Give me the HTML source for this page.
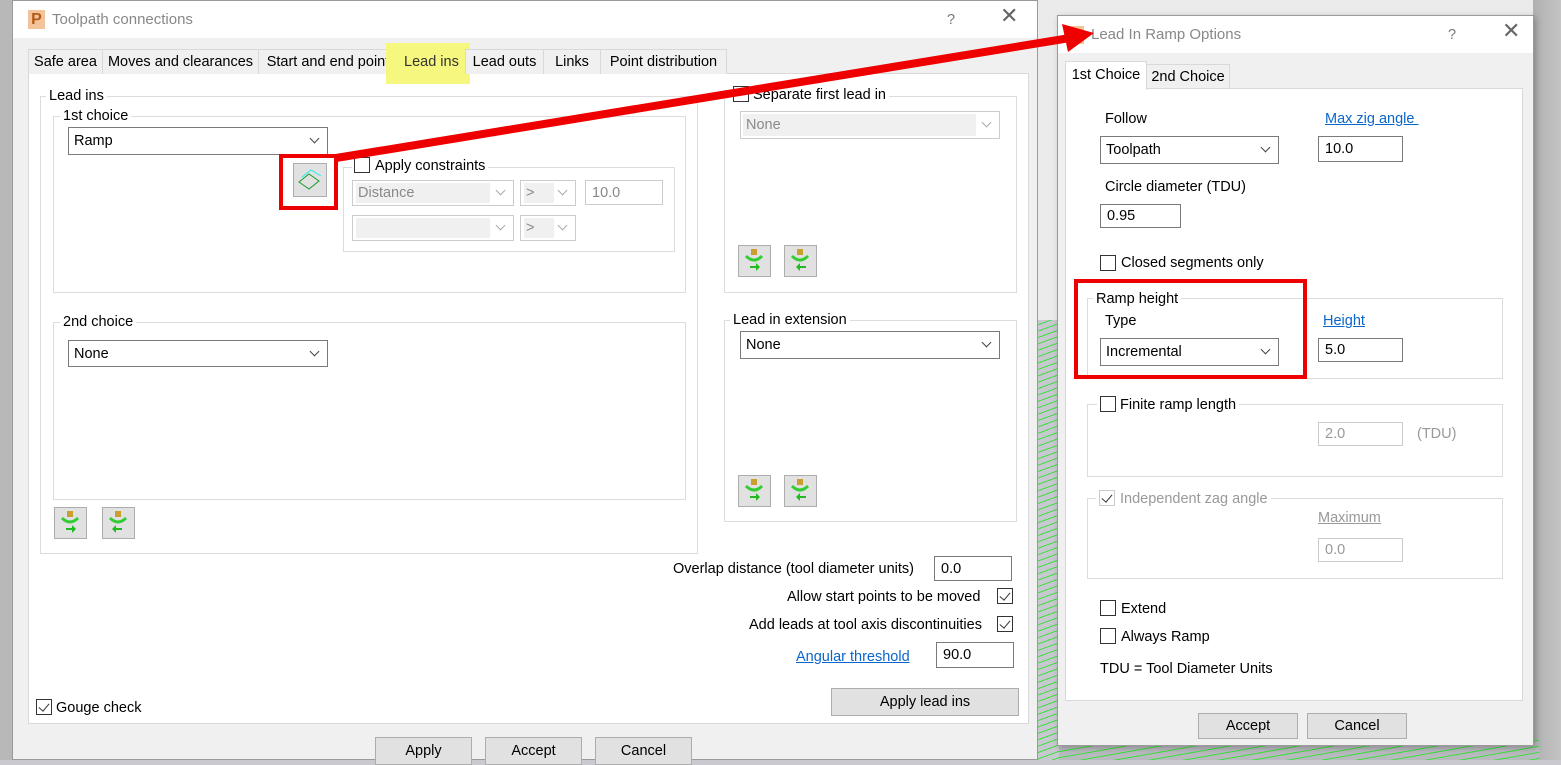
<!DOCTYPE html>
<html><head><meta charset="utf-8"><style>
*{box-sizing:border-box;margin:0;padding:0}
body{width:1561px;height:760px;position:relative;overflow:hidden;background:#c9c9cf;font-family:"Liberation Sans",sans-serif;font-size:14.5px;color:#000}
.a{position:absolute}
.t{position:absolute;white-space:nowrap;line-height:18px}
.grp{position:absolute;border:1px solid #dcdcdc}
.lbl{position:absolute;background:#fff;padding:0 3px;white-space:nowrap;line-height:18px}
.sel{position:absolute;background:#fff;border:1px solid #7a7a7a;padding-left:5px;display:flex;align-items:center}
.sel::after{content:"";position:absolute;right:9px;top:50%;margin-top:-6px;width:6px;height:6px;border-right:1px solid #444;border-bottom:1px solid #444;transform:rotate(45deg)}
.dis{border-color:#ccc;color:#8a8a8a}
.dis::after{border-color:#aaa}
.inp{position:absolute;background:#fff;border:1px solid #7a7a7a;padding-left:6px;display:flex;align-items:center}
.cb{position:absolute;width:16px;height:16px;border:1px solid #333;background:#fff}
.ck::after{content:"";position:absolute;left:4px;top:1px;width:5px;height:9px;border-right:1px solid #333;border-bottom:1px solid #333;transform:rotate(40deg)}
.btn{position:absolute;background:#e1e1e1;border:1px solid #adadad;display:flex;align-items:center;justify-content:center}
.ib{position:absolute;width:33px;height:32px;background:#e1e1e1;border:1px solid #adadad}
.link{color:#0a66cc;text-decoration:underline}
.tab{position:absolute;top:49px;height:25px;border:1px solid #d9d9d9;border-bottom:none;background:#f0f0f0;display:flex;align-items:center;justify-content:center;white-space:nowrap}
</style></head><body>
<div class="a" style="left:0;top:0;width:14px;height:760px;background:#b8b8b8"></div>
<div class="a" style="left:1037px;top:0;width:22px;height:760px;background:repeating-linear-gradient(160deg,#c8c8d0 0 5px,#3ce03c 5px 6px)"></div>
<div class="a" style="left:1037px;top:0;width:524px;height:320px;background:#ebebeb"></div>
<div class="a" style="left:1533px;top:0;width:28px;height:760px;background:linear-gradient(90deg,#b0b0b0,#c4c4c4)"></div>
<div class="a" style="left:1059px;top:740px;width:480px;height:20px;background:repeating-linear-gradient(170deg,#b9b9c0 0 5px,#3ce03c 5px 6px)"></div>

<div class="a" style="left:12px;top:0;width:1026px;height:760px;background:#f0f0f0;border:1px solid #9a9a9a"></div>
<div class="a" style="left:13px;top:1px;width:1024px;height:37px;background:#fff"></div>
<div class="a" style="left:28px;top:10px;width:17px;height:19px;background:#f3c49a;color:#b35a1a;font-weight:bold;font-size:16px;line-height:19px;text-align:center">P</div>
<div class="t" style="left:52px;top:11px;color:#888;font-size:15px">Toolpath connections</div>
<div class="t" style="left:947px;top:11px;color:#777">?</div>
<div class="t" style="left:1000px;top:7px;color:#666;font-size:22px">✕</div>

<div class="a" style="left:28px;top:73px;width:1001px;height:651px;background:#fff;border:1px solid #d9d9d9"></div>
<div class="tab" style="left:28px;width:75px">Safe area</div>
<div class="tab" style="left:102px;width:157px">Moves and clearances</div>
<div class="tab" style="left:258px;width:140px">Start and end point</div>
<div class="a" style="left:386px;top:43px;width:84px;height:41px;background:#f6f77e"></div>
<div class="t" style="left:404px;top:53px;color:#333">Lead ins</div>
<div class="tab" style="left:465px;width:79px">Lead outs</div>
<div class="tab" style="left:543px;width:58px">Links</div>
<div class="tab" style="left:600px;width:127px">Point distribution</div>

<div class="grp" style="left:40px;top:96px;width:658px;height:458px"></div>
<div class="lbl" style="left:46px;top:87px">Lead ins</div>
<div class="grp" style="left:53px;top:116px;width:633px;height:177px"></div>
<div class="lbl" style="left:60px;top:107px">1st choice</div>
<div class="sel" style="left:68px;top:127px;width:260px;height:28px">Ramp</div>
<div class="ib" style="left:293px;top:163px;width:34px;height:34px"><svg width="32" height="32"><path d="M8 13 L17 6 L27 12" fill="none" stroke="#2ee" stroke-width="1"/><path d="M5 18 L15 10 L25 17 L15 25 Z" fill="none" stroke="#1a9a2a" stroke-width="1"/></svg></div>
<div class="grp" style="left:343px;top:167px;width:332px;height:85px"></div>
<div class="lbl" style="left:352px;top:157px;padding-left:2px"><span class="cb" style="position:relative;display:inline-block;vertical-align:-3px;margin-right:5px"></span>Apply constraints</div>
<div class="sel dis" style="left:352px;top:180px;width:162px;height:26px"><span class="a" style="left:3px;top:2px;width:134px;height:20px;background:#f0f0f0"></span><span style="position:relative">Distance</span></div>
<div class="sel dis" style="left:520px;top:180px;width:56px;height:26px"><span class="a" style="left:3px;top:2px;width:30px;height:20px;background:#f0f0f0"></span><span style="position:relative">&gt;</span></div>
<div class="inp dis" style="left:585px;top:180px;width:78px;height:25px;border-color:#ccc;color:#888">10.0</div>
<div class="sel dis" style="left:352px;top:215px;width:162px;height:26px"><span class="a" style="left:3px;top:2px;width:134px;height:20px;background:#f0f0f0"></span></div>
<div class="sel dis" style="left:520px;top:215px;width:56px;height:26px"><span class="a" style="left:3px;top:2px;width:30px;height:20px;background:#f0f0f0"></span><span style="position:relative">&gt;</span></div>

<div class="grp" style="left:53px;top:322px;width:633px;height:178px"></div>
<div class="lbl" style="left:60px;top:313px">2nd choice</div>
<div class="sel" style="left:68px;top:340px;width:260px;height:27px">None</div>
<div class="ib" style="left:54px;top:507px"></div><div class="ib" style="left:102px;top:507px"></div>

<div class="grp" style="left:724px;top:96px;width:293px;height:197px"></div>
<div class="lbl" style="left:730px;top:86px"><span class="cb" style="position:relative;display:inline-block;vertical-align:-3px;margin-right:4px"></span>Separate first lead in</div>
<div class="sel dis" style="left:740px;top:111px;width:260px;height:28px"><span class="a" style="left:2px;top:2px;width:233px;height:22px;background:#f0f0f0"></span><span style="position:relative">None</span></div>
<div class="ib" style="left:738px;top:245px"></div><div class="ib" style="left:784px;top:245px"></div>
<div class="grp" style="left:724px;top:320px;width:293px;height:202px"></div>
<div class="lbl" style="left:730px;top:311px">Lead in extension</div>
<div class="sel" style="left:740px;top:331px;width:260px;height:28px">None</div>
<div class="ib" style="left:738px;top:475px"></div><div class="ib" style="left:784px;top:475px"></div>

<div class="t" style="left:673px;top:560px">Overlap distance (tool diameter units)</div>
<div class="inp" style="left:934px;top:556px;width:78px;height:25px">0.0</div>
<div class="t" style="left:787px;top:588px">Allow start points to be moved</div>
<div class="cb ck" style="left:997px;top:588px"></div>
<div class="t" style="left:749px;top:616px">Add leads at tool axis discontinuities</div>
<div class="cb ck" style="left:997px;top:616px"></div>
<div class="t link" style="left:796px;top:648px">Angular threshold</div>
<div class="inp" style="left:936px;top:642px;width:78px;height:26px">90.0</div>
<div class="btn" style="left:831px;top:688px;width:188px;height:28px">Apply lead ins</div>
<div class="cb ck" style="left:36px;top:699px"></div>
<div class="t" style="left:56px;top:699px">Gouge check</div>
<div class="btn" style="left:375px;top:737px;width:97px;height:28px">Apply</div>
<div class="btn" style="left:485px;top:737px;width:97px;height:28px">Accept</div>
<div class="btn" style="left:595px;top:737px;width:97px;height:28px">Cancel</div>

<div class="a" style="left:1057px;top:15px;width:477px;height:731px;background:#f0f0f0;border:1px solid #9a9a9a;box-shadow:2px 2px 6px rgba(0,0,0,.25)"></div>
<div class="a" style="left:1058px;top:16px;width:475px;height:37px;background:#fff"></div>
<div class="a" style="left:1067px;top:26px;width:17px;height:18px;background:#f3c49a"></div>
<div class="t" style="left:1091px;top:26px;color:#888;font-size:15px">Lead In Ramp Options</div>
<div class="t" style="left:1448px;top:26px;color:#777">?</div>
<div class="t" style="left:1502px;top:22px;color:#666;font-size:22px">✕</div>
<div class="a" style="left:1065px;top:88px;width:458px;height:613px;background:#fff;border:1px solid #d9d9d9"></div>
<div class="a" style="left:1065px;top:61px;width:82px;height:29px;background:#fff;border:1px solid #d9d9d9;border-bottom:none;line-height:27px;text-align:center">1st Choice</div>
<div class="tab" style="left:1146px;top:64px;width:84px;height:24px">2nd Choice</div>

<div class="t" style="left:1105px;top:110px">Follow</div>
<div class="t link" style="left:1325px;top:110px">Max zig angle&nbsp;</div>
<div class="sel" style="left:1100px;top:136px;width:179px;height:28px">Toolpath</div>
<div class="inp" style="left:1318px;top:136px;width:85px;height:26px">10.0</div>
<div class="t" style="left:1105px;top:178px">Circle diameter (TDU)</div>
<div class="inp" style="left:1100px;top:204px;width:81px;height:24px">0.95</div>
<div class="cb" style="left:1100px;top:255px"></div>
<div class="t" style="left:1121px;top:254px">Closed segments only</div>

<div class="grp" style="left:1087px;top:298px;width:416px;height:81px"></div>
<div class="lbl" style="left:1093px;top:290px">Ramp height</div>
<div class="t" style="left:1105px;top:312px">Type</div>
<div class="t link" style="left:1323px;top:312px">Height</div>
<div class="sel" style="left:1100px;top:338px;width:179px;height:28px">Incremental</div>
<div class="inp" style="left:1318px;top:338px;width:85px;height:24px">5.0</div>

<div class="grp" style="left:1087px;top:404px;width:416px;height:73px"></div>
<div class="lbl" style="left:1097px;top:396px"><span class="cb" style="position:relative;display:inline-block;vertical-align:-3px;margin-right:4px"></span>Finite ramp length</div>
<div class="inp" style="left:1318px;top:422px;width:85px;height:24px;border-color:#ccc;color:#999">2.0</div>
<div class="t" style="left:1417px;top:425px;color:#999">(TDU)</div>

<div class="grp" style="left:1087px;top:498px;width:416px;height:81px"></div>
<div class="lbl" style="left:1096px;top:490px;color:#999"><span class="cb ck" style="position:relative;display:inline-block;vertical-align:-3px;margin-right:5px;border-color:#ccc"></span>Independent zag angle</div>
<div class="t" style="left:1318px;top:509px;color:#999;text-decoration:underline">Maximum</div>
<div class="inp" style="left:1318px;top:538px;width:85px;height:24px;border-color:#ccc;color:#999">0.0</div>

<div class="cb" style="left:1100px;top:600px"></div>
<div class="t" style="left:1121px;top:600px">Extend</div>
<div class="cb" style="left:1100px;top:628px"></div>
<div class="t" style="left:1121px;top:628px">Always Ramp</div>
<div class="t" style="left:1100px;top:660px">TDU = Tool Diameter Units</div>
<div class="btn" style="left:1198px;top:713px;width:100px;height:26px">Accept</div>
<div class="btn" style="left:1307px;top:713px;width:100px;height:26px">Cancel</div>

<svg class="a" style="left:0;top:0" width="1561" height="760">
<rect x="281" y="156" width="55" height="52" fill="none" stroke="#e00" stroke-width="4"/>
<rect x="1076" y="281" width="229" height="96" fill="none" stroke="#e00" stroke-width="4"/>
<line x1="336" y1="158" x2="1070" y2="38" stroke="#e00" stroke-width="8"/>
<polygon points="1062,24 1094,33 1068,52" fill="#e00"/>
</svg>
<svg class="a" style="left:0;top:0" width="1040" height="560">
<g fill="none" stroke="#3c3" stroke-width="3">
<path d="M62 518 q8 8 16 0 M110 518 q8 8 16 0 M746 256 q8 8 16 0 M792 256 q8 8 16 0 M746 486 q8 8 16 0 M792 486 q8 8 16 0"/>
</g>
<g fill="#c9a030"><rect x="67" y="511" width="6" height="6"/><rect x="115" y="511" width="6" height="6"/><rect x="751" y="249" width="6" height="6"/><rect x="797" y="249" width="6" height="6"/><rect x="751" y="479" width="6" height="6"/><rect x="797" y="479" width="6" height="6"/></g>
<g fill="#2b2"><path d="M66 528h6v-3l4 4-4 4v-3h-6z M122 528h-6v-3l-4 4 4 4v-3h6z M750 266h6v-3l4 4-4 4v-3h-6z M806 266h-6v-3l-4 4 4 4v-3h6z M750 496h6v-3l4 4-4 4v-3h-6z M806 496h-6v-3l-4 4 4 4v-3h6z"/></g>
</svg>
</body></html>
